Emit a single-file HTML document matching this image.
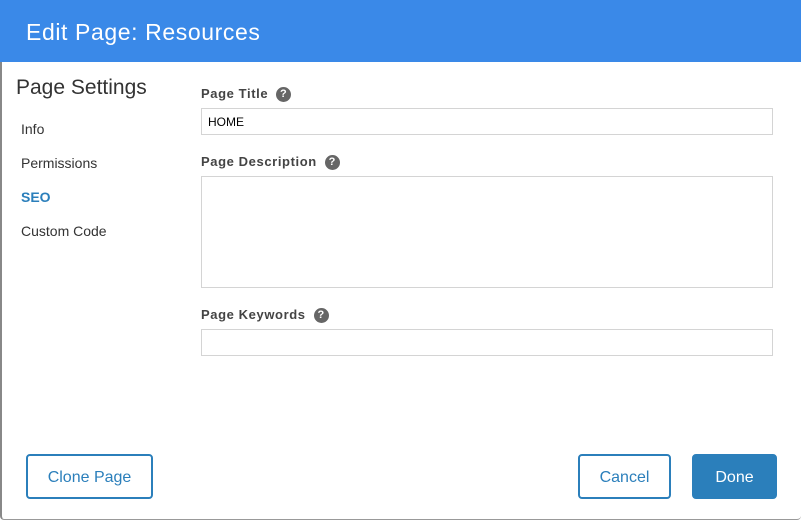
<!DOCTYPE html>
<html><head><style>
*{margin:0;padding:0;box-sizing:border-box}
body{width:801px;height:520px;background:#fff;font-family:"Liberation Sans",sans-serif;position:relative;overflow:hidden}
.frame{position:absolute;left:0;top:0;width:801px;height:520px;border-left:2px solid #888;border-bottom:1px solid #999;border-radius:0 0 4px 4px}
.hdr{position:absolute;left:0;top:0;width:801px;height:62px;background:#3a89e8;color:#fff;font-size:23px;padding:19px 0 0 26px;letter-spacing:.6px}
.t{position:absolute;color:#333}
.q{display:inline-block;width:15px;height:15px;border-radius:50%;background:#666;color:#fff;font-size:11px;font-weight:bold;text-align:center;line-height:15px;vertical-align:1px;margin-left:8px}
.lbl{position:absolute;left:201px;font-size:13px;font-weight:bold;color:#444;letter-spacing:.6px}
.in{position:absolute;left:201px;width:572px;border:1px solid #d4d4d4;background:#fff}
.btn{position:absolute;top:454px;height:45px;border:2px solid #2b7fbb;border-radius:4px;color:#2b7fbb;font-size:16px;text-align:center;line-height:43px}
</style></head><body>
<div class="frame"></div>
<div class="hdr">Edit Page: Resources</div>
<div class="t" style="left:16px;top:76px;font-size:21px;color:#333">Page Settings</div>
<div class="t" style="left:21px;top:121px;font-size:14px">Info</div>
<div class="t" style="left:21px;top:155px;font-size:14px">Permissions</div>
<div class="t" style="left:21px;top:189px;font-size:14px;font-weight:bold;color:#2b7fbb">SEO</div>
<div class="t" style="left:21px;top:223px;font-size:14px">Custom Code</div>
<div class="lbl" style="top:86px">Page Title<span class="q">?</span></div>
<div class="in" style="top:108px;height:27px;font-size:12px;padding:6px 0 0 6px;color:#000">HOME</div>
<div class="lbl" style="top:154px">Page Description<span class="q">?</span></div>
<div class="in" style="top:176px;height:112px"></div>
<div class="lbl" style="top:307px">Page Keywords<span class="q">?</span></div>
<div class="in" style="top:329px;height:27px"></div>
<div class="btn" style="left:26px;width:127px">Clone Page</div>
<div class="btn" style="left:578px;width:93px">Cancel</div>
<div class="btn" style="left:692px;width:85px;background:#2b7fbb;color:#fff">Done</div>
</body></html>
